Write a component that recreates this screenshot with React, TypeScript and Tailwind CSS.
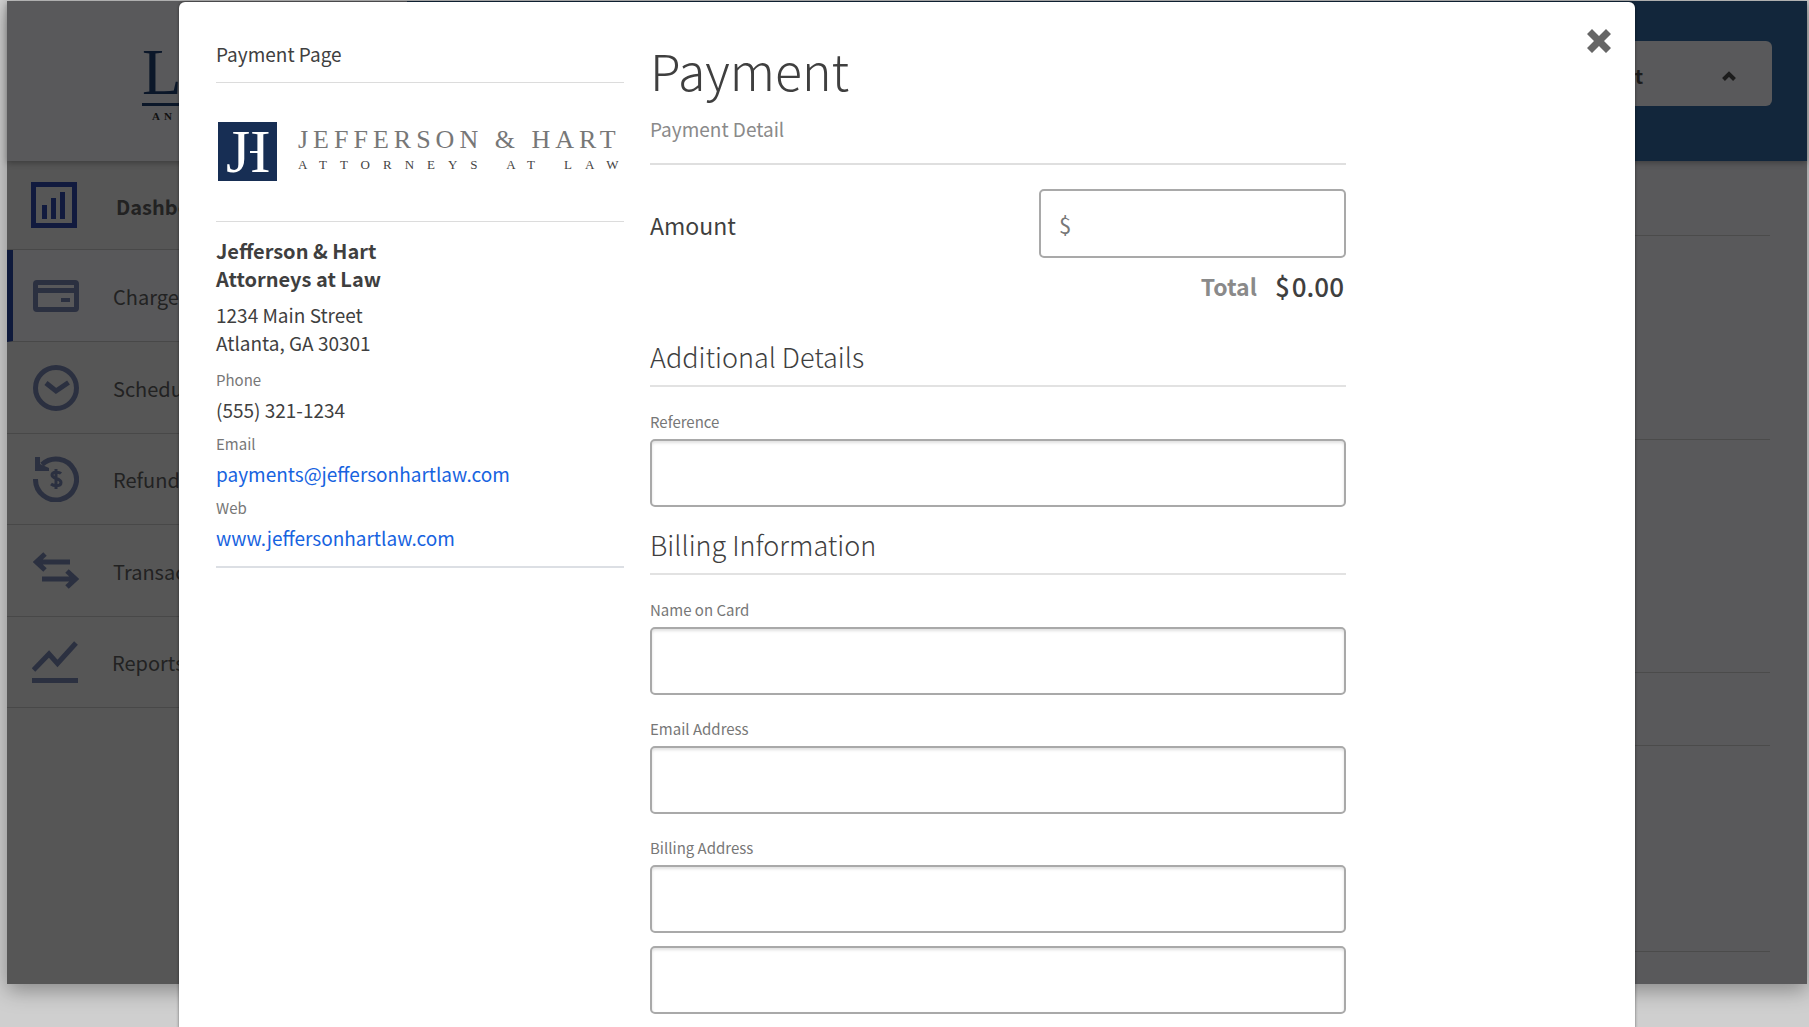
import type { ReactNode } from "react";

type NavItem = {
  label: string;
  icon: ReactNode;
  active?: boolean;
};

const DashboardIcon = () => (
  <svg width="46" height="46" viewBox="0 0 46 46" className="-ml-px text-[#111a3e]" fill="currentColor">
    <path d="M0 0h46v46H0zM5 5v36h36V5z" fillRule="evenodd" />
    <path d="M11 23h5v14h-5zM20 16h5v21h-5zM29 10h5v27h-5z" />
  </svg>
);

const CardIcon = () => (
  <svg width="46" height="46" viewBox="0 0 46 46" fill="currentColor">
    <path d="M4 7h38q4 0 4 4v24q0 4-4 4H4q-4 0-4-4V11q0-4 4-4zM5 12v3h36v-3zM5 20v14h36V20z" fillRule="evenodd" />
    <path d="M28 25h9v4h-9z" />
  </svg>
);

const ClockIcon = () => (
  <svg width="46" height="46" viewBox="0 0 46 46" fill="none" stroke="currentColor" strokeWidth="5">
    <circle cx="23" cy="23" r="20.5" />
    <path d="M13 18l10 8 12.500-8.500" />
  </svg>
);

const RefundIcon = () => (
  <svg width="46" height="46" viewBox="0 0 46 46" fill="none" stroke="currentColor">
    <path d="M2.500 23A20.500 20.500 0 1 0 9 8.500" strokeWidth="5" />
    <path d="M2 1h5v7l9 4v3H2z" fill="currentColor" stroke="none" />
    <path d="M28 17.500c-1.500-1.500-9-2.500-9 1.500s9 3 9 7.500-7.500 3.500-10 1.500M23 13v20" strokeWidth="3" />
  </svg>
);

const TransferIcon = () => (
  <svg width="46" height="46" viewBox="0 0 46 46" fill="none" stroke="currentColor" strokeWidth="5">
    <path d="M37 14H4M12 6l-8.500 8L12 22" />
    <path d="M9 31h33M34 23l8.500 8-8.500 8" />
  </svg>
);

const ReportIcon = () => (
  <svg width="46" height="46" viewBox="0 0 46 46" className="-ml-px" fill="none" stroke="currentColor" strokeWidth="5">
    <path d="M1.500 31L17 15l8.500 9.500L44 4M0 41.500h46" />
  </svg>
);

const navItems: NavItem[] = [
  { label: "Charge", icon: <CardIcon />, active: true },
  { label: "Schedule", icon: <ClockIcon /> },
  { label: "Refund", icon: <RefundIcon /> },
  { label: "Transactions", icon: <TransferIcon /> },
  { label: "Reports", icon: <ReportIcon /> },
];

const Background = () => {
  return (
    <div className="mt-px mb-[43px] ml-[7px] mr-0.5 flex flex-1 flex-col bg-[#565656] shadow-[0_6px_20px_rgba(0,0,0,0.35)]">
      <header className="z-10 flex h-40 justify-between bg-[#59595b] shadow-[0_2px_6px_rgba(0,0,0,0.3)]">
        <div className="flex w-[400px] flex-col pt-10 pl-[135px] font-['Liberation_Serif',serif]">
          <span className="text-[65px] leading-[62px] text-[#0b1729]">L</span>
          <span className="h-[3px] bg-[#0b1729]" />
          <span className="pl-2.5 text-[11px] leading-5 font-bold tracking-[4px] text-[#111]">AN</span>
        </div>
        <div className="flex flex-1 justify-end bg-[#12263b] pt-10 pr-[35px]">
          <button className="flex h-[65px] w-[260px] items-center justify-between rounded-md bg-[#59595b] pt-1 pr-9 pl-[52px] text-xl font-bold text-[#1c1c1c]">
            Account
            <svg width="14" height="10" viewBox="0 0 14 10" fill="none" stroke="currentColor" strokeWidth="4">
              <path d="M1.500 8.500L7 3l5.500 5.500" />
            </svg>
          </button>
        </div>
      </header>
      <div className="flex flex-1">
        <nav className="w-[400px] text-[#2b3040]">
          <a href="#dashboard" className="flex h-[89px] items-center border-b border-[#484848] pl-[25px] text-xl font-bold">
            <DashboardIcon />
            <span className="pt-1 pl-[39px] text-[#222]">Dashboard</span>
          </a>
          {navItems.map((item) => (
            <a
              key={item.label}
              href={"#" + item.label.toLowerCase()}
              className={
                item.active
                  ? "flex h-[92px] items-center border-b border-l-[6px] border-b-[#484848] border-l-[#0f1a3c] bg-[#58585a] pl-5 text-xl"
                  : "flex h-[91px] items-center border-b border-[#484848] pl-[26px] text-xl odd:h-[92px]"
              }
            >
              {item.icon}
              <span className="pt-0.5 pl-[34px] text-[#222]">{item.label}</span>
            </a>
          ))}
        </nav>
        <div className="flex flex-1 flex-col bg-[#59595b] pr-[37px]">
          <div className="h-[75px] border-b border-[#4b4b4b]" />
          <div className="h-[204px] border-b border-[#4b4b4b]" />
          <div className="h-[233px] border-b border-[#4b4b4b]" />
          <div className="h-[73px] border-b border-[#4b4b4b]" />
          <div className="h-[206px] border-b border-[#4b4b4b]" />
        </div>
      </div>
    </div>
  );
};

const FirmLogo = () => {
  return (
    <div className="flex h-[139px] items-center border-b border-[#dcdcdc] pb-0.5 pl-0.5 font-['Liberation_Serif',serif]">
      <svg width="59" height="59" viewBox="0 0 59 59" className="shrink-0 overflow-visible">
        <rect width="59" height="59" fill="#172e54" />
        <g fill="#fff" fontFamily="Liberation Serif, serif" fontSize="62">
          <text x="8" y="50">J</text>
          <text x="32" y="50">I</text>
        </g>
        <rect x="32" y="29" width="10" height="2" fill="#fff" />
      </svg>
      <div className="pl-[21px] whitespace-nowrap">
        <p className="text-[26px] leading-7 tracking-[5px] text-[#777]">JEFFERSON &amp; HART</p>
        <p className="text-[13px] leading-[22px] tracking-[13px] text-[#444]">ATTORNEYS AT LAW</p>
      </div>
    </div>
  );
};

const Contact = ({ label, children }: { label: string; children: ReactNode }) => (
  <div className="pt-1">
    <p className="text-[15px] leading-7 text-[#777]">{label}</p>
    <p className="text-[19px] leading-8">{children}</p>
  </div>
);

const SectionTitle = ({ children }: { children: ReactNode }) => (
  <h2 className="border-b-2 border-[#e2e2e2] pb-2 text-[27px] leading-10 font-light">{children}</h2>
);

const inputClass =
  "h-[68px] w-full rounded-[5px] border-2 border-[#a9a9a9] bg-white px-4 text-[22px] shadow-[inset_0_2px_3px_rgba(0,0,0,0.12)] outline-none";

const Field = ({ id, label }: { id: string; label: string }) => (
  <div className="flex flex-col">
    <label htmlFor={id} className="text-[15px] leading-6 text-[#777]">
      {label}
    </label>
    <input id={id} type="text" className={"mt-[5px] " + inputClass} />
  </div>
);

const PaymentModal = () => {
  return (
    <div
      role="dialog"
      aria-label="Payment"
      className="relative mt-0.5 flex h-full w-full max-w-[1456px] items-start gap-[26px] rounded-t-md bg-white pl-[37px] shadow-[0_0_3px_rgba(0,0,0,0.5)]"
    >
      <button aria-label="Close" className="absolute top-[27px] right-6 text-[#666]">
        <svg width="24" height="24" viewBox="0 0 24 24" fill="currentColor">
          <path d="M5 0l7 7 7-7 5 5-7 7 7 7-5 5-7-7-7 7-5-5 7-7-7-7z" />
        </svg>
      </button>

      <aside className="w-[408px] shrink-0 border-b-2 border-[#dcdfe4] pt-[37px] pb-3">
        <p className="h-11 border-b border-[#dcdcdc] text-[19px] leading-[30px]">Payment Page</p>
        <FirmLogo />
        <p className="pt-[15px] text-[20px] leading-7 font-bold">
          Jefferson &amp; Hart
          <br />
          Attorneys at Law
        </p>
        <p className="pt-2 pb-[5px] text-[19px] leading-7">
          1234 Main Street
          <br />
          Atlanta, GA 30301
        </p>
        <Contact label="Phone">(555) 321-1234</Contact>
        <Contact label="Email">
          <a href="mailto:payments@jeffersonhartlaw.com" className="text-[#1763e0]">
            payments@jeffersonhartlaw.com
          </a>
        </Contact>
        <Contact label="Web">
          <a href="#web" className="text-[#1763e0]">
            www.jeffersonhartlaw.com
          </a>
        </Contact>
      </aside>

      <form className="flex max-w-[696px] flex-1 flex-col pt-[37px]">
        <h1 className="text-[50px] leading-[60px] font-light">Payment</h1>
        <p className="border-b-2 border-[#dfdfdf] pt-4 pb-5 text-[19px] leading-7 text-[#8a8a8a]">Payment Detail</p>

        <div className="flex items-center justify-between pt-6">
          <label htmlFor="amount" className="pt-0.5 text-[23px] leading-8">
            Amount
          </label>
          <input
            id="amount"
            type="text"
            placeholder="$"
            className="h-[69px] w-[307px] rounded-[5px] border-2 border-[#a9a9a9] bg-white px-[18px] text-[22px] outline-none placeholder:text-[#777]"
          />
        </div>
        <p className="flex items-center justify-end gap-[18px] pt-2.5 pr-0.5 text-[23px] leading-9">
          <span className="font-bold text-[#8a8a8a]">Total</span>
          <span className="flex gap-0.5 text-[26px] font-medium">
            <span>$</span>
            <span>0.00</span>
          </span>
        </p>

        <div className="pt-[33px]">
          <SectionTitle>Additional Details</SectionTitle>
        </div>
        <div className="pt-[23px] pb-[18px]">
          <Field id="reference" label="Reference" />
        </div>
        <SectionTitle>Billing Information</SectionTitle>
        <div className="flex flex-col gap-[22px] pt-[23px]">
          <Field id="name" label="Name on Card" />
          <Field id="email" label="Email Address" />
          <Field id="address" label="Billing Address" />
        </div>
        <input aria-label="Billing Address line 2" type="text" className={"mt-[13px] " + inputClass} />
      </form>
    </div>
  );
};

const App = () => {
  return (
    <div className="relative flex h-screen flex-col overflow-hidden bg-[#cfcfcf] font-['Noto_Sans_CJK_SC',sans-serif] text-[#3f3f3f]">
      <Background />
      <div className="absolute inset-0 z-20 flex justify-center overflow-hidden pl-[5px]">
        <PaymentModal />
      </div>
    </div>
  );
};

export default App;
